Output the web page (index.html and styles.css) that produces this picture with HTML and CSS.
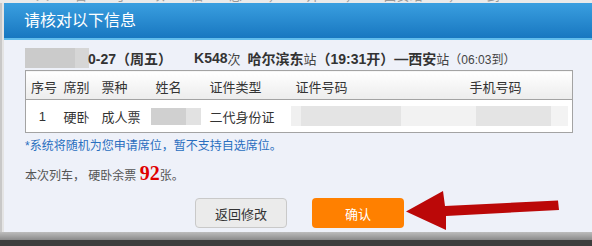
FILE: index.html
```html
<!DOCTYPE html>
<html lang="zh-CN">

<head>
    <meta charset="UTF-8">
    <title>请核对以下信息</title>
    <link rel="stylesheet" href="styles.css">
</head>

<body>

    <div class="backdrop">
        <div class="backdrop-text">人 音 寸 以 信 息 ， 开 ， 西安站 ， 到</div>
    </div>

    <div class="dialog">
        <div class="dialog-title">请核对以下信息</div>

        <div class="dialog-body">
            <div class="train-info">
                <span class="blur-date"></span>
                <b>0-27（周五）</b>
                <b class="train-no">K548</b><span class="small">次</span>
                <b class="station">哈尔滨东</b><span class="small">站</span><b>（19:31开）—西安</b><span class="small">站</span><span class="arrive">（06:03到）</span>
            </div>

            <table class="passengers">
                <thead>
                    <tr>
                        <th class="col-no">序号</th>
                        <th class="col-seat">席别</th>
                        <th class="col-type">票种</th>
                        <th class="col-name">姓名</th>
                        <th class="col-card">证件类型</th>
                        <th class="col-id">证件号码</th>
                        <th class="col-phone">手机号码</th>
                    </tr>
                </thead>
                <tbody>
                    <tr>
                        <td class="col-no center">1</td>
                        <td>硬卧</td>
                        <td>成人票</td>
                        <td><span class="blur-name"></span></td>
                        <td>二代身份证</td>
                        <td colspan="2"><span class="blur-id"></span></td>
                    </tr>
                </tbody>
            </table>

            <div class="note">*系统将随机为您申请席位，暂不支持自选席位。</div>
            <div class="remain">本次列车， 硬卧余票 <span class="count">92</span>张。</div>

            <div class="actions">
                <button class="btn-back">返回修改</button>
                <button class="btn-ok">确认</button>
            </div>
        </div>
    </div>

    <div class="shade"></div>
    <div class="taskbar"></div>

    <svg class="arrow" width="592" height="246" viewBox="0 0 592 246">
        <polygon points="406,211.5 443,191 445,206 558,200.5 559,210 446,216 446,230" fill="#bb0808" />
    </svg>

</body>

</html>
```

FILE: styles.css
```css
* {
    margin: 0;
    padding: 0;
    box-sizing: border-box;
}

body {
    width: 592px;
    height: 246px;
    overflow: hidden;
    position: relative;
    font-family: "Liberation Sans", "Noto Sans CJK SC", sans-serif;
    font-size: 13px;
    color: #333;
    background: linear-gradient(to right, #c8c8c8 0, #c8c8c8 2px, #e4e4e4 2px);
}

.backdrop {
    height: 3px;
    overflow: hidden;
    background: #eaeaea;
}

.backdrop-text {
    margin-top: -11px;
    padding-left: 36px;
    font-size: 13px;
    line-height: 14px;
    color: #999;
    word-spacing: 22px;
    white-space: nowrap;
}

.dialog {
    width: 592px;
    height: 229px;
    margin-left: 4px;
    background: #eef1f9;
}

.dialog-title {
    height: 37px;
    padding-left: 20px;
    line-height: 35px;
    font-size: 16px;
    color: #fff;
    background: linear-gradient(#3a9fe0, #1877c0);
    border-bottom: 2px solid #62bdec;
}

.dialog-body {
    padding: 8px 0 0 21px;
}

.train-info {
    display: flex;
    align-items: center;
    height: 20px;
    font-size: 14px;
    white-space: nowrap;
    color: #333;
}

.train-info b {
    font-weight: bold;
}

.blur-date {
    width: 64px;
    height: 20px;
    margin-right: -1px;
    background: linear-gradient(to right, #cbcbcb 0, #cbcbcb 50px, #d6d6d6 50px);
}

.train-no {
    margin-left: 22px;
}

.station {
    margin-left: 7px;
}

.small {
    font-size: 13px;
    font-weight: normal;
    color: #444;
}

.arrive {
    font-size: 12px;
    color: #444;
}

.passengers {
    width: 548px;
    margin-top: 2px;
    border-collapse: collapse;
    border: 1px solid #a3a3a3;
    table-layout: fixed;
}

.passengers th,
.passengers td {
    padding: 0 0 0 5px;
    text-align: left;
    font-weight: normal;
    font-size: 13px;
    white-space: nowrap;
    overflow: hidden;
}

.passengers th {
    height: 29px;
    padding-top: 3px;
    background: linear-gradient(#ffffff, #ececec);
    border-bottom: 1px solid #a3a3a3;
}

.passengers td {
    height: 33px;
    background: #fff;
}

.passengers .center {
    text-align: center;
    padding-left: 0;
}

.col-no {
    width: 33px;
}

.col-seat {
    width: 38px;
}

.col-type {
    width: 54px;
}

.col-name {
    width: 54px;
}

.col-card {
    width: 86px;
}

.col-id {
    width: 174px;
}

.blur-name {
    display: block;
    width: 52px;
    height: 17px;
    margin-left: -7px;
    background: linear-gradient(to right, #d0d0d0 0, #d0d0d0 37px, #e2e2e2 37px);
}

.blur-id {
    display: block;
    width: 277px;
    height: 20px;
    margin-left: -5px;
    background: linear-gradient(to right,
            #f0f0f0 0, #f0f0f0 10px,
            #e4e4e4 10px, #e4e4e4 110px,
            #f2f2f2 110px, #f2f2f2 185px,
            #e4e4e4 185px, #e4e4e4 260px,
            #f3f3f3 260px);
}

.note {
    margin-top: 5px;
    font-size: 12px;
    line-height: 16px;
    color: #2a6fbf;
}

.remain {
    margin-top: 9px;
    font-size: 12px;
    line-height: 20px;
    color: #555;
}

.count {
    font-family: "Liberation Serif", serif;
    font-weight: bold;
    font-size: 20px;
    color: #e00000;
}

.actions {
    display: flex;
    gap: 25px;
    margin-top: 12px;
    padding-left: 170px;
}

.actions button {
    width: 92px;
    height: 30px;
    border-radius: 4px;
    font-family: "Liberation Sans", "Noto Sans CJK SC", sans-serif;
    font-size: 13px;
    cursor: pointer;
}

.btn-back {
    background: #ebebeb;
    border: 1px solid #c9c9c9;
    color: #333;
}

.btn-ok {
    background: #ff8000;
    border: none;
    color: #fff;
}

.shade {
    height: 8px;
    background: linear-gradient(#bdbdbd, #8a8a8a);
}

.taskbar {
    height: 6px;
    background: #3d3d3d;
}

.arrow {
    position: absolute;
    top: 0;
    left: 0;
}
```
